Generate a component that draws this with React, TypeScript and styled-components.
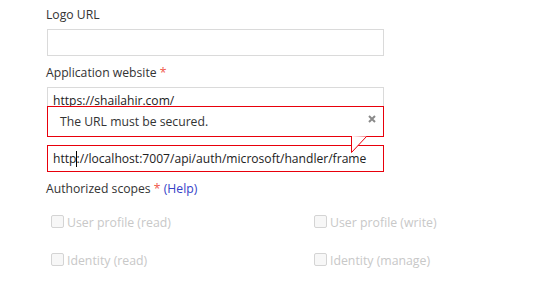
import React from "react";
import styled, { createGlobalStyle } from "styled-components";

const Global = createGlobalStyle`
  html, body { margin: 0; padding: 0; background: #fff; }
  body { font-family: "Open Sans", "Noto Sans", "Liberation Sans", sans-serif; }
`;

const Form = styled.div`
  width: 549px;
  padding: 5px 0 0 47px;
  box-sizing: border-box;
  font-size: 12.2px;
  color: #333;
`;

const Group = styled.div`
  position: relative;
  display: flex;
  flex-direction: column;
  width: 337px;
  margin-bottom: 7px;
`;

const Label = styled.div`
  height: 20px;
  line-height: 20px;
  margin-bottom: 4px;
  margin-left: -1px;
  white-space: nowrap;
`;

const Req = styled.span`
  color: #f0564a;
`;

const Help = styled.span`
  color: #3441c8;
`;

const Input = styled.div<{ $error?: boolean }>`
  height: 27px;
  box-sizing: border-box;
  border: 1px solid ${(p) => (p.$error ? "#e8000b" : "#dadada")};
  padding: 0 5px;
  line-height: 25px;
  font-size: 12.1px;
  white-space: nowrap;
  overflow: hidden;
  color: #222;
`;

const Caret = styled.span`
  display: inline-block;
  width: 1px;
  height: 16px;
  margin-right: -1px;
  background: #000;
  vertical-align: -4px;
`;

const Tip = styled.div`
  position: absolute;
  left: 0;
  right: 0;
  top: -15px;
  height: 31px;
  box-sizing: border-box;
  border: 1px solid #e8000b;
  background: #fff;
  padding: 0 12px;
  line-height: 29px;
  color: #333;
  z-index: 2;
`;

const Close = styled.svg`
  position: absolute;
  right: 7px;
  top: 8px;
`;

const Arrow = styled.svg`
  position: absolute;
  left: 303px;
  top: 29px;
  overflow: visible;
`;

const Scopes = styled.div`
  display: grid;
  grid-template-columns: 263px 200px;
  row-gap: 18px;
  margin-top: 9px;
  padding-left: 4px;
`;

const Check = styled.label`
  display: flex;
  align-items: center;
  gap: 3px;
  height: 20px;
  font-size: 12.3px;
  color: #c8c8c8;
  white-space: nowrap;
`;

const Box = styled.span`
  width: 11px;
  height: 11px;
  margin-top: -1px;
  border: 1px solid #d4d4d4;
  border-radius: 2px;
  background: #f7f7f7;
  flex: none;
`;

export default function App() {
  return (
    <>
      <Global />
      <Form>
        <Group>
          <Label>Logo URL</Label>
          <Input />
        </Group>
        <Group>
          <Label>
            Application website <Req>*</Req>
          </Label>
          <Input>https://shailahir.com/</Input>
        </Group>
        <Group>
          <Label aria-label="Redirect URI" />
          <Input $error>
            http<Caret />://localhost:7007/api/auth/microsoft/handler/frame
          </Input>
          <Tip>
            The URL must be secured.
            <Close width="8" height="8" viewBox="0 0 8 8">
              <path d="M1 1L7 7M7 1L1 7" stroke="#8a8a8a" strokeWidth="2" />
            </Close>
            <Arrow width="16" height="17" viewBox="0 0 16 17">
              <path d="M0.5 0V16.5L15.5 0.5" fill="#fff" stroke="#e8000b" strokeWidth="1" />
            </Arrow>
          </Tip>
        </Group>
        <Group>
          <Label>
            Authorized scopes <Req>*</Req> <Help>(Help)</Help>
          </Label>
        </Group>
        <Scopes>
          <Check>
            <Box />
            User profile (read)
          </Check>
          <Check>
            <Box />
            User profile (write)
          </Check>
          <Check>
            <Box />
            Identity (read)
          </Check>
          <Check>
            <Box />
            Identity (manage)
          </Check>
        </Scopes>
      </Form>
    </>
  );
}
